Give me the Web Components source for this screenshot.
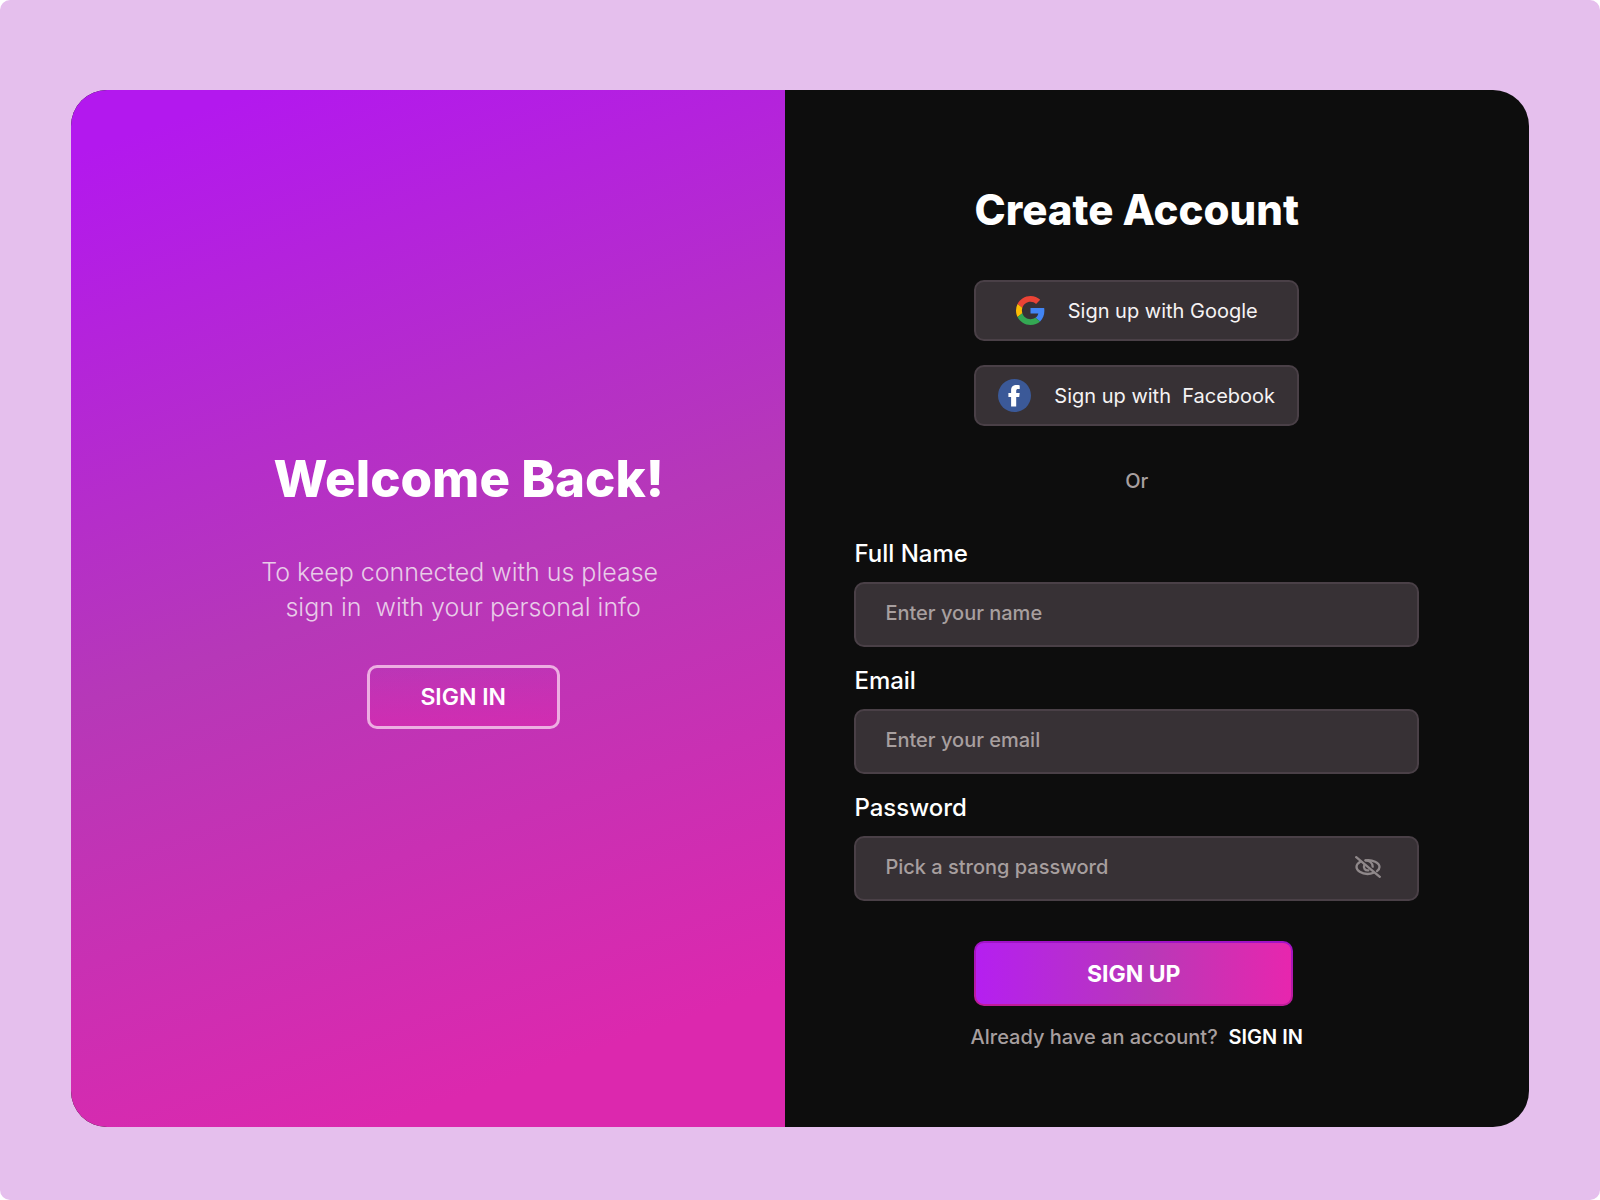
<!DOCTYPE html>
<html lang="en">
<head>
<meta charset="utf-8">
<meta name="viewport" content="width=device-width, initial-scale=1">
<title>Create Account</title>
<style>
    html { background: white; }
    body { margin: 0; font-family: Inter, "Open Sans", sans-serif; color: white; }
</style>
</head>
<body>
<auth-page>
    <welcome-panel slot="aside"></welcome-panel>
    <signup-form></signup-form>
</auth-page>

<script>
class AuthPage extends HTMLElement {
    constructor() {
        super()
        this.attachShadow({ mode: 'open' })
        this.shadowRoot.innerHTML = `
            <style>
                :host {
                    display: flex;
                    box-sizing: border-box;
                    min-height: 100vh;
                    padding: 90px 71px 73px;
                    border-radius: 10px;
                    background: #e5bfed;
                }
                main {
                    flex: 1;
                    display: grid;
                    grid-template-columns: 49fr 51fr;
                    border-radius: 36px;
                    overflow: hidden;
                    background: #0d0d0d;
                }
            </style>
            <main>
                <slot name="aside"></slot>
                <slot></slot>
            </main>
        `
    }
}

class WelcomePanel extends HTMLElement {
    constructor() {
        super()
        this.attachShadow({ mode: 'open' })
        this.shadowRoot.innerHTML = `
            <style>
                :host {
                    display: flex;
                    flex-direction: column;
                    align-items: center;
                    justify-content: center;
                    gap: 40px;
                    padding: 0 0 46px 70px;
                    text-align: center;
                    background: linear-gradient(161deg, #b318ee 5%, #b638b8 48%, #dc28ae 89%);
                }
                h1, p { margin: 0; white-space: pre; }
                h1 { font-size: 51px; line-height: 72px; font-weight: 800; }
                p { font-size: 25px; line-height: 35px; font-weight: 300; color: #e8cce8; }
                button {
                    box-sizing: border-box;
                    width: 193px;
                    height: 64px;
                    border: 3px solid #edaee2;
                    border-radius: 10px;
                    background: linear-gradient(rgba(223, 39, 174, 0), rgba(223, 39, 174, .5));
                    font: 600 23px/32px Inter, sans-serif;
                    color: white;
                }
            </style>
            <h1> Welcome Back!</h1>
            <p>To keep connected with us please 
sign in  with your personal info</p>
            <button type="button">SIGN IN</button>
        `
    }
}

class SocialButton extends HTMLElement {
    constructor() {
        super()
        this.attachShadow({ mode: 'open' })
        this.shadowRoot.innerHTML = `
            <style>
                :host { display: block; }
                button {
                    display: flex;
                    align-items: center;
                    justify-content: center;
                    gap: 23px;
                    box-sizing: border-box;
                    width: 100%;
                    height: 61px;
                    padding: 0;
                    border: 2px solid #4a4047;
                    border-radius: 10px;
                    background: #373135;
                    font: 400 20px/30px Inter, sans-serif;
                    color: #f5f3f4;
                    white-space: nowrap;
                }
            </style>
            <button type="button"><slot name="icon"></slot><span><slot></slot></span></button>
        `
    }
}

class TextField extends HTMLElement {
    constructor() {
        super()
        this.attachShadow({ mode: 'open' })
        this.shadowRoot.innerHTML = `
            <style>
                :host { display: grid; gap: 10px; }
                label { font-size: 24px; line-height: 36px; font-weight: 500; }
                .box {
                    display: flex;
                    align-items: center;
                    box-sizing: border-box;
                    height: 65px;
                    padding: 0 36px 3px 29px;
                    border: 2px solid #4a4047;
                    border-radius: 10px;
                    background: #373135;
                }
                input {
                    flex: 1;
                    min-width: 0;
                    padding: 0;
                    border: 0;
                    outline: 0;
                    background: none;
                    font: 500 20px/30px Inter, sans-serif;
                    color: white;
                }
                input::placeholder { color: #a79f9f; opacity: 1; }
            </style>
            <label for="field"></label>
            <div class="box"><input id="field"><slot></slot></div>
        `
    }

    connectedCallback() {
        const input = this.shadowRoot.querySelector('input')
        this.shadowRoot.querySelector('label').textContent = this.getAttribute('label')
        input.type = this.getAttribute('type') || 'text'
        input.placeholder = this.getAttribute('placeholder')
    }
}

class SignupForm extends HTMLElement {
    constructor() {
        super()
        this.attachShadow({ mode: 'open' })
        this.shadowRoot.innerHTML = `
            <style>
                :host { display: block; padding: 90px 110px 75px 69px; }
                form { display: grid; gap: 40px; justify-items: center; }
                h2 { margin: 0; font-size: 42px; line-height: 60px; font-weight: 800; }
                .social { display: grid; gap: 24px; width: 325px; }
                p { margin: 0; font-size: 20px; line-height: 30px; font-weight: 500; color: #a79f9f; white-space: pre; }
                .fields { display: grid; gap: 16px; width: 100%; }
                .finish {
                    display: flex;
                    flex-direction: column;
                    align-items: center;
                    gap: 16px;
                    width: 325px;
                }
                .submit {
                    align-self: flex-start;
                    box-sizing: border-box;
                    width: 319px;
                    height: 65px;
                    border: 2px solid transparent;
                    border-radius: 10px;
                    background:
                        linear-gradient(90deg, #b51ff0, #b938b8 55%, #e726ae) padding-box,
                        linear-gradient(#a012c8, #c01c98) border-box;
                    font: 700 23px/32px Inter, sans-serif;
                    color: white;
                }
                a { font-weight: 600; color: white; text-decoration: none; }
                .eye {
                    display: block;
                    padding: 0;
                    border: 0;
                    background: none;
                    color: #8f888a;
                }
                svg { display: block; }
            </style>
            <form>
                <h2>Create Account</h2>
                <div class="social">
                    <social-button>
                        <svg slot="icon" width="29" height="29" viewBox="0 0 48 48">
                            <path fill="#ea4335" d="M24 9.5c3.54 0 6.71 1.22 9.21 3.6l6.85-6.85C35.9 2.38 30.47 0 24 0 14.62 0 6.51 5.38 2.56 13.22l7.98 6.19C12.43 13.72 17.74 9.5 24 9.5z"/>
                            <path fill="#4285f4" d="M46.98 24.55c0-1.57-.15-3.09-.38-4.55H24v9.02h12.94c-.58 2.96-2.26 5.48-4.78 7.18l7.73 6c4.51-4.18 7.09-10.36 7.09-17.65z"/>
                            <path fill="#fbbc05" d="M10.53 28.59A14.5 14.5 0 0 1 9.77 24c0-1.6.27-3.14.76-4.59l-7.98-6.19A23.9 23.9 0 0 0 0 24c0 3.88.92 7.54 2.56 10.78l7.97-6.19z"/>
                            <path fill="#34a853" d="M24 48c6.48 0 11.93-2.13 15.89-5.81l-7.73-6c-2.15 1.45-4.92 2.3-8.16 2.3-6.26 0-11.57-4.22-13.47-9.91l-7.98 6.19C6.51 42.62 14.62 48 24 48z"/>
                        </svg>
                        Sign up with Google
                    </social-button>
                    <social-button>
                        <svg slot="icon" width="33" height="33" viewBox="0 0 33 33">
                            <circle cx="16.5" cy="16.5" r="16.5" fill="#3b5998"/>
                            <path fill="#fff" d="M18.2 27.500v-9.600h3l.5-4h-3.500v-1.900c0-1.300.6-1.900 1.900-1.900h1.600V6.400c-.6-.1-1.700-.3-2.900-.3-3.700 0-5.700 1.900-5.700 5.100v2.700h-2.700v4h2.700v9.600z"/>
                        </svg>
                        Sign up with&nbsp; Facebook
                    </social-button>
                </div>
                <p>Or</p>
                <div class="fields">
                    <text-field label="Full Name" placeholder="Enter your name"></text-field>
                    <text-field label="Email" type="email" placeholder="Enter your email"></text-field>
                    <text-field label="Password" type="password" placeholder="Pick a strong password">
                        <button class="eye" type="button" aria-label="Show password">
                            <svg width="26" height="22" viewBox="0 0 26 22" fill="none" stroke="currentColor" stroke-width="2.3" stroke-linecap="round">
                                <path d="M5.500 5.500C3 7 1.500 9.200 1.500 11c0 3.500 5 7 11 7 2.200 0 4.200-.4 6-1.200M10.500 4.300C17.500 3 24.500 7.200 24.500 11c0 1.500-1 2.900-2.500 4.100"/>
                                <path d="M9.300 9c-1.400 3 .9 5.800 4 5.400M10.500 4.300c3.800.1 7 2.600 7.200 6.400"/>
                                <path d="M1.200 1.200l23.600 19.600"/>
                            </svg>
                        </button>
                    </text-field>
                </div>
                <div class="finish">
                    <button class="submit" type="button">SIGN UP</button>
                    <p>Already have an account?  <a href="#">SIGN IN</a></p>
                </div>
            </form>
        `
    }
}

customElements.define('auth-page', AuthPage)
customElements.define('welcome-panel', WelcomePanel)
customElements.define('social-button', SocialButton)
customElements.define('text-field', TextField)
customElements.define('signup-form', SignupForm)
</script>
</body>
</html>
